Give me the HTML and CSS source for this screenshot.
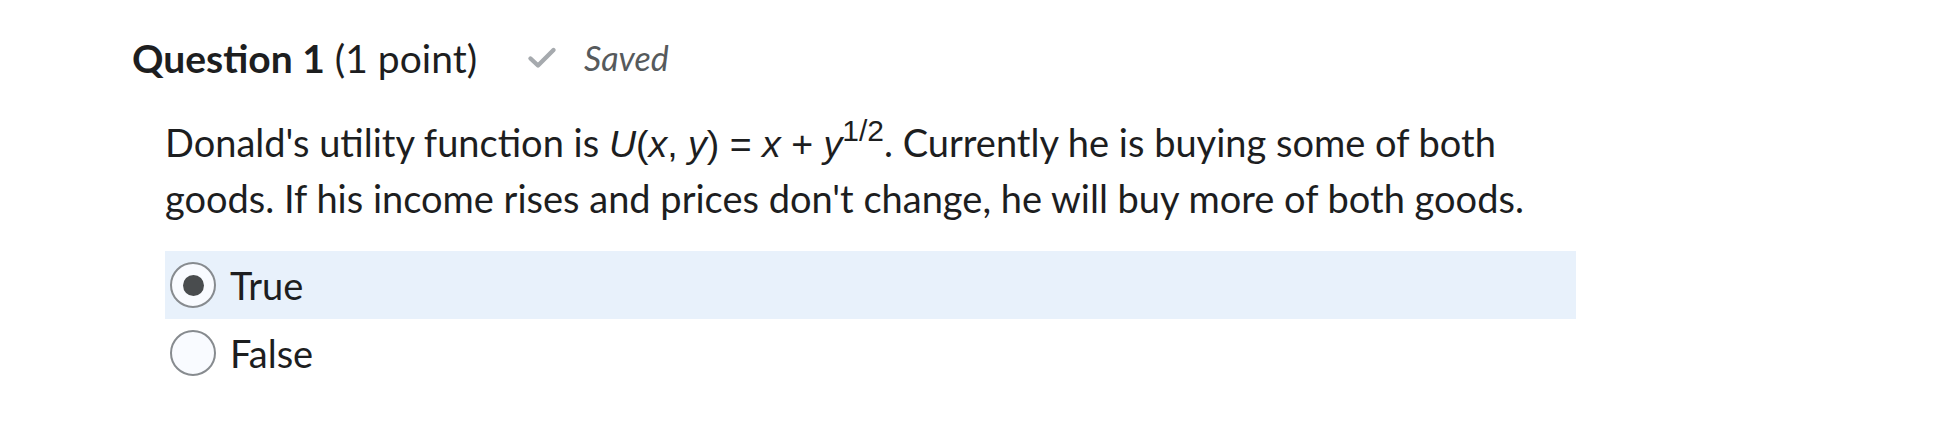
FILE: index.html
```html
<!DOCTYPE html>
<html lang="en">
<head>
<meta charset="utf-8">
<title>Question 1</title>
<link rel="stylesheet" href="styles.css">
</head>
<body>
<div class="question">
  <div class="q-header">
    <h2 class="q-title"><strong>Question 1</strong> (1 point)</h2>
    <div class="q-saved">
      <svg class="check" viewBox="0 0 30 24" width="30" height="24" aria-hidden="true">
        <path d="M3.5 12.5 L11 19.5 L26.5 4" fill="none" stroke="#a6aaae" stroke-width="4.4" stroke-linecap="round" stroke-linejoin="round"/>
      </svg>
      <span class="saved-text">Saved</span>
    </div>
  </div>
  <div class="q-body">
    <p class="q-text">Donald's utility function is <span class="math"><i>U</i>(<i>x</i>, <i>y</i>) = <i>x</i> + <i>y</i><sup>1/2</sup></span>. Currently he is buying some of both goods. If his income rises and prices don't change, he will buy more of both goods.</p>
    <div class="options">
      <label class="option selected">
        <span class="radio checked"><span class="dot"></span></span>
        <span class="opt-label">True</span>
      </label>
      <label class="option">
        <span class="radio"></span>
        <span class="opt-label">False</span>
      </label>
    </div>
  </div>
</div>
</body>
</html>
```

FILE: styles.css
```css
html, body {
  margin: 0;
  padding: 0;
  background: #ffffff;
}

body {
  font-family: Lato, "Noto Sans", sans-serif;
  color: #1d1e1f;
}

.question {
  padding: 36px 0 0 132px;
}

.q-header {
  display: flex;
  align-items: center;
  height: 44px;
}

.q-title {
  margin: 0;
  font-size: 39px;
  font-weight: 400;
  line-height: 44px;
  color: #1d1e1f;
}

.q-title strong {
  font-weight: 700;
}

.q-saved {
  display: flex;
  align-items: center;
  margin-left: 50px;
}

.check {
  display: block;
}

.saved-text {
  margin-left: 27px;
  font-size: 34px;
  font-style: italic;
  color: #565a5c;
  line-height: 44px;
}

.q-body {
  padding-left: 33px;
  width: 1411px;
}

.q-text {
  margin: 35px 0 0 0;
  font-size: 38px;
  line-height: 54px;
  width: 1400px;
  color: #1d1e1f;
}

.math {
  font-family: "Liberation Sans", Arial, sans-serif;
  font-size: 37.5px;
}

.math i {
  font-style: italic;
}

.math sup {
  font-size: 30px;
  line-height: 0;
  vertical-align: 0.55em;
}

.options {
  margin-top: 26px;
  display: flex;
  flex-direction: column;
}

.option {
  display: flex;
  align-items: center;
  height: 68px;
  padding-left: 5px;
}

.option.selected {
  background: #e8f1fb;
}

.radio {
  box-sizing: border-box;
  width: 46px;
  height: 46px;
  border-radius: 50%;
  border: 2.5px solid #878b8f;
  background: #f9fbff;
  display: flex;
  align-items: center;
  justify-content: center;
  flex: none;
}

.dot {
  width: 21px;
  height: 21px;
  border-radius: 50%;
  background: #494c4e;
}

.opt-label {
  margin-left: 14px;
  font-size: 38px;
  color: #1d1e1f;
}
```
